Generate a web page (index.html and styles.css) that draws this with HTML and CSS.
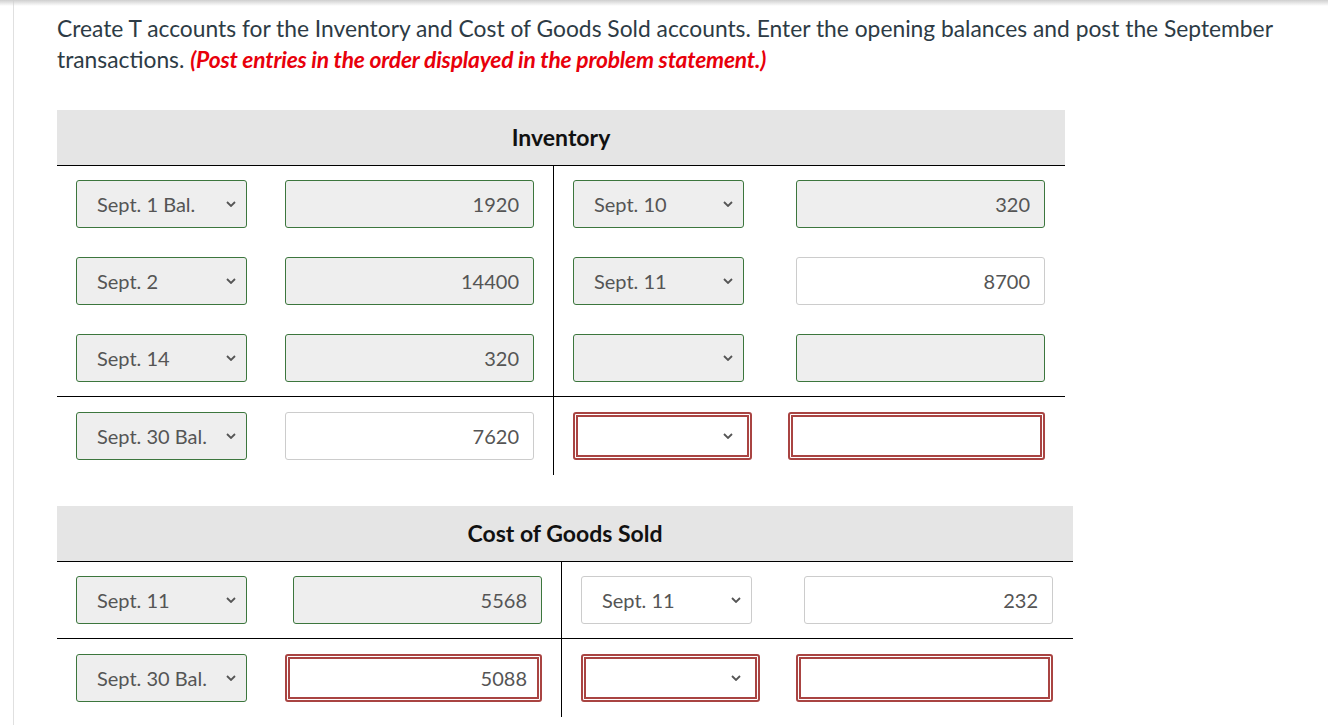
FILE: index.html
```html
<!DOCTYPE html>
<html>

<head>
    <meta charset="UTF-8">
    <title>T accounts: Inventory and Cost of Goods Sold</title>
    <link rel="stylesheet" href="styles.css">
</head>

<body>
    <div class="top-shadow"></div>
    <div class="page">
        <p class="prompt">
            Create T accounts for the Inventory and Cost of Goods Sold accounts. Enter the opening balances and post the September
            transactions. <em class="note">(Post entries in the order displayed in the problem statement.)</em>
        </p>

        <!-- Inventory -->
        <div class="taccount inv">
            <div class="t-head">Inventory</div>
            <div class="t-row">
                <div class="t-cell debit">
                    <div class="entry">
                        <div class="pick ok"><span>Sept. 1 Bal.</span><svg class="chev" width="10" height="6" viewBox="0 0 10 6"><polyline points="1,1 5,5 9,1" /></svg></div>
                        <input class="amount ok" type="text" value="1920" readonly>
                    </div>
                    <div class="entry">
                        <div class="pick ok"><span>Sept. 2</span><svg class="chev" width="10" height="6" viewBox="0 0 10 6"><polyline points="1,1 5,5 9,1" /></svg></div>
                        <input class="amount ok" type="text" value="14400" readonly>
                    </div>
                    <div class="entry">
                        <div class="pick ok"><span>Sept. 14</span><svg class="chev" width="10" height="6" viewBox="0 0 10 6"><polyline points="1,1 5,5 9,1" /></svg></div>
                        <input class="amount ok" type="text" value="320" readonly>
                    </div>
                </div>
                <div class="t-cell credit">
                    <div class="entry">
                        <div class="pick ok"><span>Sept. 10</span><svg class="chev" width="10" height="6" viewBox="0 0 10 6"><polyline points="1,1 5,5 9,1" /></svg></div>
                        <input class="amount ok" type="text" value="320" readonly>
                    </div>
                    <div class="entry">
                        <div class="pick ok"><span>Sept. 11</span><svg class="chev" width="10" height="6" viewBox="0 0 10 6"><polyline points="1,1 5,5 9,1" /></svg></div>
                        <input class="amount" type="text" value="8700" readonly>
                    </div>
                    <div class="entry">
                        <div class="pick ok"><span></span><svg class="chev" width="10" height="6" viewBox="0 0 10 6"><polyline points="1,1 5,5 9,1" /></svg></div>
                        <input class="amount ok" type="text" value="" readonly>
                    </div>
                </div>
            </div>
            <div class="t-row last">
                <div class="t-cell debit">
                    <div class="entry">
                        <div class="pick ok"><span>Sept. 30 Bal.</span><svg class="chev" width="10" height="6" viewBox="0 0 10 6"><polyline points="1,1 5,5 9,1" /></svg></div>
                        <input class="amount" type="text" value="7620" readonly>
                    </div>
                </div>
                <div class="t-cell credit">
                    <div class="entry">
                        <div class="pick bad"><span></span><svg class="chev" width="10" height="6" viewBox="0 0 10 6"><polyline points="1,1 5,5 9,1" /></svg></div>
                        <input class="amount bad" type="text" value="" readonly>
                    </div>
                </div>
            </div>
        </div>

        <!-- Cost of Goods Sold -->
        <div class="taccount cogs">
            <div class="t-head">Cost of Goods Sold</div>
            <div class="t-row">
                <div class="t-cell debit">
                    <div class="entry">
                        <div class="pick ok"><span>Sept. 11</span><svg class="chev" width="10" height="6" viewBox="0 0 10 6"><polyline points="1,1 5,5 9,1" /></svg></div>
                        <input class="amount ok" type="text" value="5568" readonly>
                    </div>
                </div>
                <div class="t-cell credit">
                    <div class="entry">
                        <div class="pick"><span>Sept. 11</span><svg class="chev" width="10" height="6" viewBox="0 0 10 6"><polyline points="1,1 5,5 9,1" /></svg></div>
                        <input class="amount" type="text" value="232" readonly>
                    </div>
                </div>
            </div>
            <div class="t-row last">
                <div class="t-cell debit">
                    <div class="entry">
                        <div class="pick ok"><span>Sept. 30 Bal.</span><svg class="chev" width="10" height="6" viewBox="0 0 10 6"><polyline points="1,1 5,5 9,1" /></svg></div>
                        <input class="amount bad" type="text" value="5088" readonly>
                    </div>
                </div>
                <div class="t-cell credit">
                    <div class="entry">
                        <div class="pick bad"><span></span><svg class="chev" width="10" height="6" viewBox="0 0 10 6"><polyline points="1,1 5,5 9,1" /></svg></div>
                        <input class="amount bad" type="text" value="" readonly>
                    </div>
                </div>
            </div>
        </div>
    </div>
</body>

</html>
```

FILE: styles.css
```css
html,
body {
    margin: 0;
    padding: 0;
    background: #fff;
    font-family: Lato, "Open Sans", sans-serif;
    color: #2d3b45;
}

.top-shadow {
    position: fixed;
    top: 0;
    left: 0;
    right: 0;
    height: 6px;
    background: linear-gradient(#cfcfcf, rgba(255, 255, 255, 0));
}

.page {
    margin-left: 13px;
    border-left: 1px solid #e0e0e0;
    padding: 13px 0 10px 43px;
}

.prompt {
    margin: 0 0 35px;
    width: 1250px;
    font-size: 22.8px;
    line-height: 31px;
}

.note {
    color: #e8000b;
    font-weight: bold;
    letter-spacing: -0.2px;
}

/* T account */

.taccount {
    margin-bottom: 31px;
}

.inv {
    width: 1008px;
}

.cogs {
    width: 1016px;
}

.t-head {
    height: 55px;
    line-height: 55px;
    background: #e5e5e5;
    border-bottom: 1px solid #000;
    text-align: center;
    font-size: 23px;
    font-weight: bold;
    color: #111;
}

.t-row {
    display: flex;
    border-bottom: 1px solid #000;
}

.t-row.last {
    border-bottom: none;
}

.t-cell {
    box-sizing: border-box;
    display: flex;
    flex-direction: column;
    gap: 29px;
    padding: 14px 0 14px 19px;
}

.t-row.last .t-cell {
    padding-top: 15px;
    padding-bottom: 15px;
}

.inv .debit {
    width: 496px;
}

.cogs .debit {
    width: 504px;
}

.credit {
    flex: 1;
    border-left: 1px solid #000;
    padding-right: 20px;
}

.debit {
    padding-right: 19px;
}

.entry {
    display: flex;
    align-items: center;
}

/* fields */

.pick,
.amount {
    box-sizing: border-box;
    height: 48px;
    border: 1px solid #ccc;
    border-radius: 3px;
    background: #fff;
    font-family: Lato, "Open Sans", sans-serif;
    font-size: 20px;
    color: #555;
}

.pick {
    width: 171px;
    display: flex;
    align-items: center;
    justify-content: space-between;
    padding: 0 10px 0 20px;
}

.chev {
    fill: none;
    stroke: #555;
    stroke-width: 1.8;
}

.amount {
    width: 249px;
    margin-left: auto;
    padding: 0 14px 0 10px;
    text-align: right;
    outline: none;
}

.ok {
    border-color: #3c763d;
    background: #eee;
}

.bad {
    border: 5px double #a94442;
    background: #fff;
}

.pick.bad {
    width: 179px;
    padding-right: 14px;
}

.amount.bad {
    width: 257px;
    padding-right: 10px;
}
```
